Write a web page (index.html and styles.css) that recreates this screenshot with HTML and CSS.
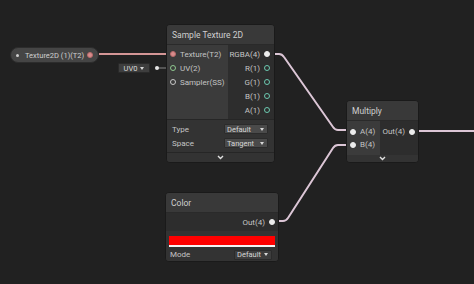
FILE: index.html
```html
<!DOCTYPE html>
<html lang="en">

<head>
    <meta charset="UTF-8">
    <title>Shader Graph</title>
    <link rel="stylesheet" href="styles.css">
</head>

<body>
    <div class="canvas">

        <svg class="wires" width="474" height="284" viewBox="0 0 474 284">
            <path class="wire wire--tex" d="M99 54 H172" />
            <path class="wire wire--uv" d="M157 68 H172" />
            <path class="wire" d="M267 54 H279 Q282 54 284 57 L333 127 Q335 130 338 130 H352" />
            <path class="wire" d="M272 221 H283 Q286 221 288 218 L333 148 Q335 145 338 145 H352" />
            <path class="wire" d="M412 131 H474" />
        </svg>

        <div class="prop">
            <span class="prop__dot"></span>
            <span class="prop__name">Texture2D (1)(T2)</span>
            <span class="port port--tex port--on"></span>
        </div>

        <div class="uv-field">
            <span>UV0</span>
            <span class="caret"></span>
        </div>
        <span class="uv-dot"></span>

        <div class="node node--sample">
            <div class="node__title">Sample Texture 2D</div>
            <div class="node__ports">
                <div class="node__inputs">
                    <div class="slot"><span class="port port--tex port--on"></span>Texture(T2)</div>
                    <div class="slot"><span class="port port--uv"></span>UV(2)</div>
                    <div class="slot"><span class="port port--ss"></span>Sampler(SS)</div>
                </div>
                <div class="node__outputs">
                    <div class="slot slot--out">RGBA(4)<span class="port port--on"></span></div>
                    <div class="slot slot--out">R(1)<span class="port port--vec"></span></div>
                    <div class="slot slot--out">G(1)<span class="port port--vec"></span></div>
                    <div class="slot slot--out">B(1)<span class="port port--vec"></span></div>
                    <div class="slot slot--out">A(1)<span class="port port--vec"></span></div>
                </div>
            </div>
            <div class="node__controls">
                <div class="control">
                    <span>Type</span>
                    <span class="dropdown">Default<span class="caret"></span></span>
                </div>
                <div class="control">
                    <span>Space</span>
                    <span class="dropdown">Tangent<span class="caret"></span></span>
                </div>
            </div>
            <div class="node__collapse">
                <svg width="7" height="5" viewBox="0 0 7 5"><path d="M1 1 L3.5 3.5 L6 1" /></svg>
            </div>
        </div>

        <div class="node node--multiply">
            <div class="node__title">Multiply</div>
            <div class="node__ports node__ports--tight">
                <div class="node__inputs">
                    <div class="slot"><span class="port port--on"></span>A(4)</div>
                    <div class="slot"><span class="port port--on"></span>B(4)</div>
                </div>
                <div class="node__outputs">
                    <div class="slot slot--out">Out(4)<span class="port port--on"></span></div>
                </div>
            </div>
            <div class="node__collapse">
                <svg width="7" height="5" viewBox="0 0 7 5"><path d="M1 1 L3.5 3.5 L6 1" /></svg>
            </div>
        </div>

        <div class="node node--color">
            <div class="node__title">Color</div>
            <div class="node__outputs node__outputs--full">
                <div class="slot slot--out">Out(4)<span class="port port--on"></span></div>
            </div>
            <div class="node__body">
                <div class="swatch"></div>
                <div class="control">
                    <span>Mode</span>
                    <span class="dropdown dropdown--mode">Default<span class="caret"></span></span>
                </div>
            </div>
        </div>

    </div>
</body>

</html>
```

FILE: styles.css
```css
body {
    margin: 0;
    background: #212121;
    font-family: Roboto, "Liberation Sans", sans-serif;
    color: #c4c4c4;
}

*,
::after,
::before {
    box-sizing: border-box;
}

.canvas {
    position: relative;
    width: 474px;
    height: 284px;
    overflow: hidden;
    background: #212121;
}

.wires {
    position: absolute;
    left: 0;
    top: 0;
}

.wire {
    fill: none;
    stroke: #dcc6d6;
    stroke-width: 2;
    stroke-linejoin: round;
}

.wire--tex {
    stroke: #d49696;
}

.wire--uv {
    stroke: #8a8a8a;
    stroke-width: 1;
}

/* property pill */
.prop {
    position: absolute;
    left: 10px;
    top: 47px;
    width: 89px;
    height: 16px;
    border-radius: 8px;
    background: #454545;
    border: 1px solid #2c2c2c;
    display: flex;
    align-items: center;
    padding: 0 5px 0 5px;
    font-size: 7.5px;
    white-space: nowrap;
}

.prop__dot {
    flex: none;
    width: 3px;
    height: 3px;
    border-radius: 50%;
    background: #cfcfcf;
}

.prop__name {
    margin-left: 6px;
    flex: 1;
    color: #cfcfcf;
}

.uv-field {
    position: absolute;
    left: 118px;
    top: 63px;
    width: 32px;
    height: 10px;
    background: #3e3e3e;
    border: 1px solid #2a2a2a;
    border-radius: 1px;
    display: flex;
    align-items: center;
    justify-content: center;
    gap: 3px;
    font-size: 7.5px;
    color: #d8d8d8;
}

.uv-dot {
    position: absolute;
    left: 155px;
    top: 66px;
    width: 4px;
    height: 4px;
    border-radius: 50%;
    background: #e6e6e6;
}

.caret {
    width: 0;
    height: 0;
    border-left: 2.5px solid transparent;
    border-right: 2.5px solid transparent;
    border-top: 3px solid #d8d8d8;
}

/* ports */
.port {
    flex: none;
    width: 6px;
    height: 6px;
    border-radius: 50%;
    border: 1.3px solid #cfcfcf;
}

.port--on {
    background: #ececec;
    border-color: #ececec;
}

.port--tex {
    border-color: #c57a7a;
}

.port--tex.port--on {
    background: #d88c8c;
    border-color: #b86a6a;
}

.port--uv {
    border-color: #8fc88f;
}

.port--ss {
    border-color: #c8c8c8;
}

.port--vec {
    border-color: #6cc9b0;
}

/* nodes */
.node {
    position: absolute;
    background: #333333;
    border: 1px solid #1a1a1a;
    border-radius: 4px;
    overflow: hidden;
    display: flex;
    flex-direction: column;
    font-size: 8px;
}

.node--sample {
    left: 166px;
    top: 24px;
    width: 109px;
    height: 139px;
}

.node--multiply {
    left: 346px;
    top: 100px;
    width: 73px;
    height: 63px;
}

.node--color {
    left: 165px;
    top: 192px;
    width: 114px;
    height: 70px;
}

.node__title {
    height: 20px;
    flex: none;
    display: flex;
    align-items: center;
    padding-left: 5px;
    background: #393939;
    border-bottom: 1px solid #2a2a2a;
    font-size: 8.5px;
    color: #cfcfcf;
}

.node__ports {
    display: flex;
    flex: none;
}

.node__inputs {
    width: 61px;
    background: #3b3b3b;
    padding: 2px 0;
}

.node__outputs {
    flex: 1;
    background: #2d2d2d;
    padding: 2px 0;
}

.node__ports--tight .node__inputs {
    width: 33px;
    padding: 4px 0;
}

.node__ports--tight .node__outputs {
    padding: 4px 0;
}

.node__ports--tight .slot {
    height: 13px;
}

.node__outputs--full {
    flex: none;
    padding: 2px 0 2px;
}

.slot {
    height: 14px;
    display: flex;
    align-items: center;
    gap: 4px;
    padding-left: 3px;
    white-space: nowrap;
}

.slot--out {
    justify-content: flex-end;
    padding-left: 0;
    padding-right: 4px;
}

.node--color .slot--out,
.node--multiply .slot--out {
    padding-right: 3px;
}

.node__controls {
    flex: none;
    background: #333333;
    border-top: 1px solid #262626;
    border-bottom: 1px solid #262626;
    padding: 2px 0;
}

.control {
    height: 14px;
    display: flex;
    align-items: center;
    justify-content: space-between;
    padding: 0 6px 0 5px;
}

.dropdown {
    width: 44px;
    height: 10px;
    background: #4a4a4a;
    border: 1px solid #2b2b2b;
    border-radius: 1px;
    display: flex;
    align-items: center;
    justify-content: space-between;
    padding: 0 3px 0 2px;
    font-size: 7.5px;
    color: #d6d6d6;
}

.dropdown--mode {
    width: 38px;
    background: #3d3d3d;
}

.node__collapse {
    flex: 1;
    display: flex;
    align-items: center;
    justify-content: center;
    background: #333333;
}

.node__collapse path {
    fill: none;
    stroke: #e0e0e0;
    stroke-width: 1.4;
}

.node__body {
    flex: 1;
    background: #333333;
    padding: 5px 3px 0;
}

.swatch {
    height: 11px;
    background: #ff0000;
    border-bottom: 2px solid #f4f4f4;
}

.node__body .control {
    height: 15px;
    padding: 0 3px 0 1px;
}
```
